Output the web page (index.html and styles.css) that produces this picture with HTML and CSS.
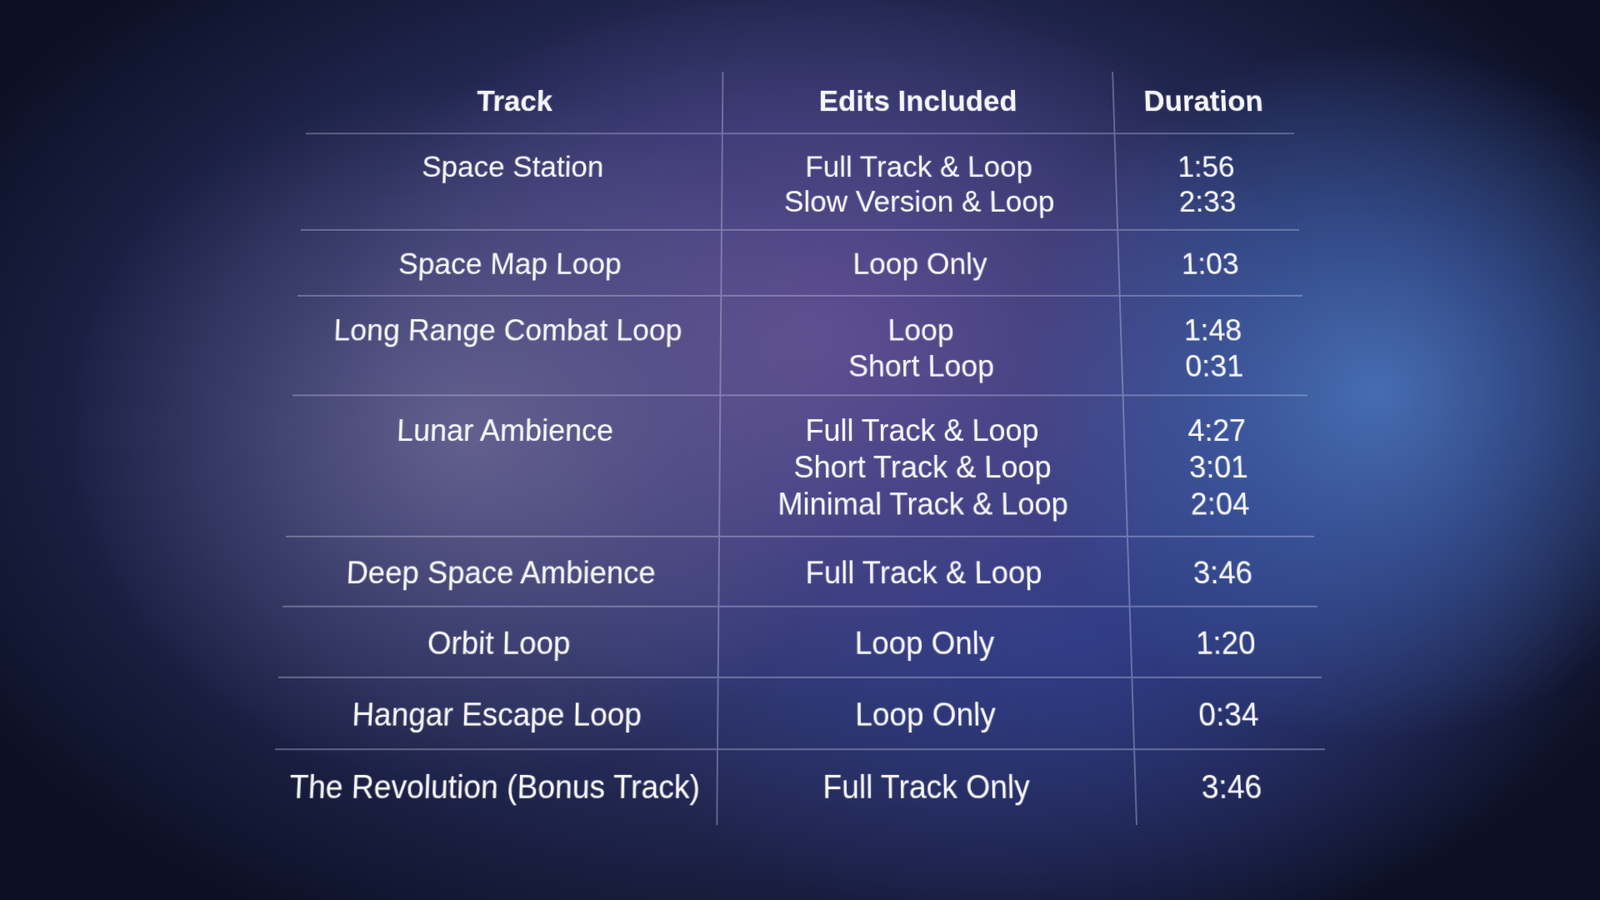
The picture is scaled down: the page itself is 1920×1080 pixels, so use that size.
FILE: index.html
```html
<!DOCTYPE html>
<html lang="en">
<head>
<meta charset="utf-8">
<title>Track List</title>
<link rel="stylesheet" href="styles.css">
</head>
<body>
<main class="stage">
  <div class="table">
    <div class="row head">
      <div class="cell">Track</div>
      <div class="cell">Edits Included</div>
      <div class="cell">Duration</div>
    </div>
    <div class="row double">
      <div class="cell">Space Station</div>
      <div class="cell">Full Track &amp; Loop<br>Slow Version &amp; Loop</div>
      <div class="cell">1:56<br>2:33</div>
    </div>
    <div class="row">
      <div class="cell">Space Map Loop</div>
      <div class="cell">Loop Only</div>
      <div class="cell">1:03</div>
    </div>
    <div class="row double">
      <div class="cell">Long Range Combat Loop</div>
      <div class="cell">Loop<br>Short Loop</div>
      <div class="cell">1:48<br>0:31</div>
    </div>
    <div class="row triple">
      <div class="cell">Lunar Ambience</div>
      <div class="cell">Full Track &amp; Loop<br>Short Track &amp; Loop<br>Minimal Track &amp; Loop</div>
      <div class="cell">4:27<br>3:01<br>2:04</div>
    </div>
    <div class="row">
      <div class="cell">Deep Space Ambience</div>
      <div class="cell">Full Track &amp; Loop</div>
      <div class="cell">3:46</div>
    </div>
    <div class="row">
      <div class="cell">Orbit Loop</div>
      <div class="cell">Loop Only</div>
      <div class="cell">1:20</div>
    </div>
    <div class="row">
      <div class="cell">Hangar Escape Loop</div>
      <div class="cell">Loop Only</div>
      <div class="cell">0:34</div>
    </div>
    <div class="row last">
      <div class="cell">The Revolution (Bonus Track)</div>
      <div class="cell">Full Track Only</div>
      <div class="cell">3:46</div>
    </div>
  </div>
</main>
</body>
</html>
```
FILE: styles.css
```css
html, body {
  margin: 0;
  padding: 0;
}
body {
  width: 1920px;
  height: 1080px;
  overflow: hidden;
  font-family: "Liberation Sans", Arial, Helvetica, sans-serif;
  color: #f6f6fa;
  background:
    radial-gradient(ellipse 430px 420px at 1650px 470px, rgba(72, 112, 182, 0.95) 0%, rgba(64, 100, 176, 0.6) 45%, rgba(50, 80, 160, 0) 100%),
    radial-gradient(ellipse 480px 420px at 560px 520px, rgba(112, 108, 150, 0.75) 0%, rgba(100, 96, 140, 0.35) 55%, rgba(90, 90, 140, 0) 100%),
    radial-gradient(ellipse 580px 440px at 980px 400px, rgba(98, 80, 148, 0.9) 0%, rgba(84, 72, 140, 0.5) 55%, rgba(70, 60, 130, 0) 100%),
    radial-gradient(ellipse 600px 380px at 1300px 760px, rgba(50, 66, 150, 0.7) 0%, rgba(40, 56, 130, 0) 100%),
    radial-gradient(ellipse 1150px 720px at 960px 500px, #3f3f7e 0%, #2e3468 45%, #1b2044 75%, #0c1024 100%);
}
.stage {
  display: flex;
  justify-content: center;
  padding-top: 68px;
}
.table {
  width: 1222px;
  transform: perspective(1000px) rotateX(4.7deg);
  text-shadow: 0 0 2px rgba(255, 255, 255, 0.25);
}
.row {
  display: grid;
  grid-template-columns: 516px 485px 221px;
  min-height: 82px;
  box-sizing: border-box;
  border-bottom: 2px solid rgba(220, 220, 245, 0.32);
}
.row.last {
  border-bottom: none;
  min-height: 84px;
}
.cell {
  font-size: 36px;
  line-height: 44px;
  text-align: center;
  padding: 20px 0 14px;
}
.double .cell {
  padding-bottom: 12px;
}
.triple .cell {
  padding-bottom: 15px;
}
.cell:nth-child(1),
.cell:nth-child(2) {
  border-right: 2px solid rgba(220, 220, 245, 0.32);
}
.head {
  min-height: 81px;
}
.head .cell {
  font-weight: bold;
  padding: 17px 0 18px;
}
```
